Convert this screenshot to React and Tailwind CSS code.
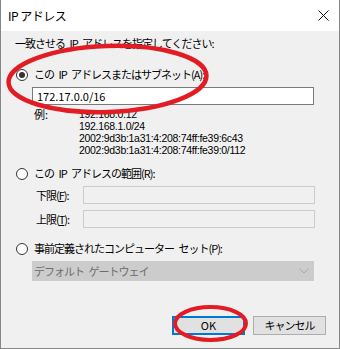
import React from 'react';

const font = { fontFamily: '"Noto Sans CJK JP", "Noto Sans", sans-serif' };

const Radio = ({ checked }) => (
  <span className="w-[12px] h-[12px] rounded-full border border-[#333] bg-white flex items-center justify-center shrink-0">
    {checked && <span className="w-[6px] h-[6px] rounded-full bg-[#333]" />}
  </span>
);

const examples = [
  '192.168.0.12',
  '192.168.1.0/24',
  '2002:9d3b:1a31:4:208:74ff:fe39:6c43',
  '2002:9d3b:1a31:4:208:74ff:fe39:0/112',
];

const App = () => {
  return (
    <div
      className="relative w-[340px] h-[349px] bg-[#f0f0f0] border-x border-b border-[#868686] text-[11px] text-black overflow-hidden flex flex-col [word-spacing:3px]"
      style={font}
    >
      <div className="h-[31px] bg-white flex items-center justify-between pl-[7px] pr-[10px] shrink-0">
        <span className="text-[12px] tracking-[-0.5px] [word-spacing:0px]">IP アドレス</span>
        <svg width="11" height="11" viewBox="0 0 11 11">
          <path d="M0.5 0.5 L10.5 10.5 M10.5 0.5 L0.5 10.5" stroke="#111" strokeWidth="1" />
        </svg>
      </div>

      <div className="flex flex-col px-[14px]">
        <div className="h-[13px] mt-[6px] leading-[13px] tracking-[-1px]">
          一致させる IP アドレスを指定してください:
        </div>

        <div className="flex items-center gap-[6px] mt-[18px] pl-[1px] h-[13px]">
          <Radio checked />
          <span className="tracking-[-1px] leading-[13px]">この IP アドレスまたはサブネット(A):</span>
        </div>

        <div className="ml-[17px] mt-[6px] w-[282px] h-[18px] bg-white border border-[#7a7a7a] flex items-center pl-[4px] leading-[13px]">
          172.17.0.0/16
        </div>

        <div className="flex ml-[19px] mt-[3px] leading-[12px]">
          <span className="w-[45px]">例:</span>
          <div className="flex flex-col tracking-[-0.3px] text-[10.5px] font-['Liberation_Sans',sans-serif] [word-spacing:0px]">
            {examples.map((ex) => (
              <span key={ex}>{ex}</span>
            ))}
          </div>
        </div>

        <div className="flex items-center gap-[6px] mt-[11px] pl-[1px] h-[13px]">
          <Radio />
          <span className="tracking-[-1px] leading-[13px]">この IP アドレスの範囲(R):</span>
        </div>

        <div className="flex items-center ml-[21px] mt-[6px]">
          <span className="w-[47px] tracking-[-1px]">下限(<u>F</u>):</span>
          <div className="w-[232px] h-[18px] bg-[#f0f0f0] border border-[#cccccc]" />
        </div>
        <div className="flex items-center ml-[21px] mt-[6px]">
          <span className="w-[47px] tracking-[-1px]">上限(<u>T</u>):</span>
          <div className="w-[232px] h-[18px] bg-[#f0f0f0] border border-[#cccccc]" />
        </div>

        <div className="flex items-center gap-[6px] mt-[14px] pl-[1px] h-[13px]">
          <Radio />
          <span className="tracking-[-1px] leading-[13px]">事前定義されたコンピューター セット(P):</span>
        </div>

        <div className="ml-[17px] mt-[6px] w-[282px] h-[20px] bg-[#cccccc] border border-[#cccccc] flex items-center justify-between px-[1px] text-[#6d6d6d]">
          <span className="tracking-[-1px]">デフォルト ゲートウェイ</span>
          <svg width="10" height="6" viewBox="0 0 10 6" className="mr-[3px]">
            <path d="M0.5 0.5 L5 5 L9.5 0.5" stroke="#a8a8a8" fill="none" strokeWidth="1" />
          </svg>
        </div>
      </div>

      <div className="flex justify-end gap-[8px] mt-auto mb-[13px] pr-[13px]">
        <button className="w-[73px] h-[19px] bg-[#e1e1e1] border-2 border-[#0078d7] flex items-center justify-center leading-none">
          OK
        </button>
        <button className="w-[73px] h-[19px] bg-[#e1e1e1] border border-[#adadad] flex items-center justify-center leading-none tracking-[-1px]">
          キャンセル
        </button>
      </div>

      <svg className="absolute inset-0 pointer-events-none" width="340" height="349">
        <ellipse cx="106.5" cy="79" rx="99" ry="33" transform="rotate(-2 106.5 79)" fill="none" stroke="#e31c23" strokeWidth="4.5" />
        <ellipse cx="209.5" cy="323.5" rx="35.5" ry="16.5" fill="none" stroke="#e31c23" strokeWidth="4" />
      </svg>
    </div>
  );
};

export default App;
